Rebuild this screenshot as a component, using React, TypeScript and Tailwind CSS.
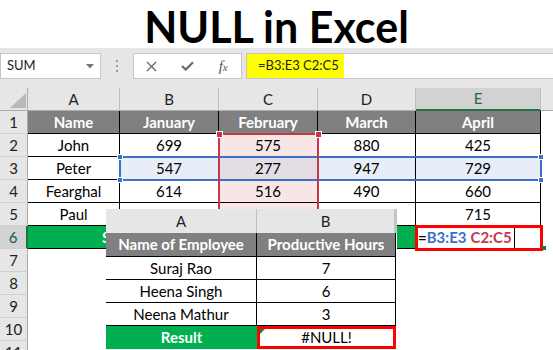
const colWidths = [92, 99, 99, 98, 125];
const colLetters = ["A", "B", "C", "D", "E"];

const tableRows = [
  ["John", "699", "575", "880", "425"],
  ["Peter", "547", "277", "947", "729"],
  ["Fearghal", "614", "516", "490", "660"],
  ["Paul", "", "", "", "715"],
];

const employees = [
  ["Suraj Rao", "7"],
  ["Heena Singh", "6"],
  ["Neena Mathur", "3"],
];

// background of a data cell, from the two selections (B3:E3 blue, C2:C5 red)
function cellBg(row: number, col: number) {
  if (row === 1 && col === 2) return "bg-[#e5dde5]";
  if (col === 2) return "bg-[#f8e6e7]";
  if (row === 1 && col >= 1) return "bg-[#e8eef8]";
  return "bg-white";
}

function RowHeader({ n, active }: { n: number; active?: boolean }) {
  return (
    <div
      className={`w-[28px] h-[23px] shrink-0 flex items-center justify-center text-[15px] border-b border-[#d0d0d0] ${
        active
          ? "bg-[#d2d2d2] text-[#1e5c3a] border-r-2 border-r-[#217346]"
          : "bg-[#e6e6e6] text-[#222] border-r border-r-[#ababab]"
      }`}
    >
      {n}
    </div>
  );
}

function FormulaBar() {
  return (
    <div className="h-[40px] bg-[#e6e6e6] flex items-start pt-[5px]">
      <div className="w-[101px] h-[26px] bg-white border border-[#c6c6c6] flex items-center justify-between pl-[6px] pr-[6px] text-[13px] text-[#222]">
        <span>SUM</span>
        <svg width="8" height="5" viewBox="0 0 8 5">
          <polygon points="0,0 8,0 4,4.5" fill="#777" />
        </svg>
      </div>
      <div className="w-[32px] h-[26px] flex flex-col items-center justify-center gap-[3px]">
        <span className="w-[2px] h-[2px] bg-[#9a9a9a]" />
        <span className="w-[2px] h-[2px] bg-[#9a9a9a]" />
        <span className="w-[2px] h-[2px] bg-[#9a9a9a]" />
      </div>
      <div className="w-[109px] h-[26px] bg-white border border-[#c6c6c6] flex items-center">
        <div className="w-[36px] flex justify-center">
          <svg width="11" height="11" viewBox="0 0 11 11">
            <path d="M1 1 L10 10 M10 1 L1 10" stroke="#6b6b6b" strokeWidth="1.4" />
          </svg>
        </div>
        <div className="w-[36px] flex justify-center">
          <svg width="13" height="10" viewBox="0 0 13 10">
            <path d="M1 5 L4.8 8.6 L12 1.2" stroke="#6b6b6b" strokeWidth="2.2" fill="none" />
          </svg>
        </div>
        <div className="w-[36px] flex justify-center">
          <span className="font-['Liberation_Serif',serif] italic text-[15px] text-[#555] leading-none">
            f<span className="text-[11px]">x</span>
          </span>
        </div>
      </div>
      <div className="ml-[4px] flex-1 h-[26px] bg-white border border-[#c6c6c6] border-r-0">
        <div className="w-[97px] h-full bg-[#ffff00] flex items-center pl-[11px] text-[13px] text-[#222]">
          =B3:E3 C2:C5
        </div>
      </div>
    </div>
  );
}

function Sheet() {
  return (
    <div className="flex flex-col">
      {/* column headers */}
      <div className="flex h-[23px]">
        <div className="w-[28px] shrink-0 bg-[#e6e6e6] border-r border-b border-[#ababab] relative">
          <svg className="absolute left-0 top-0" width="28" height="23" viewBox="0 0 28 23">
            <polygon points="10,20 26,20 26,5" fill="#b8b8b8" />
          </svg>
        </div>
        {colLetters.map((l, i) => (
          <div
            key={l}
            style={{ width: colWidths[i] }}
            className={`shrink-0 flex items-center justify-center text-[15px] border-r border-[#bfbfbf] ${
              l === "E"
                ? "bg-[#d2d2d2] text-[#1e6b40] border-b-2 border-b-[#217346]"
                : "bg-[#e6e6e6] text-[#222] border-b border-b-[#ababab]"
            }`}
          >
            {l}
          </div>
        ))}
        <div className="flex-1 bg-[#e6e6e6] border-b border-[#ababab]" />
      </div>

      {/* row 1: table header */}
      <div className="flex h-[23px]">
        <RowHeader n={1} />
        {["Name", "January", "February", "March", "April"].map((h, i) => (
          <div
            key={h}
            style={{ width: colWidths[i] }}
            className="shrink-0 flex items-center justify-center bg-[#808080] text-white font-bold text-[15px] border-r border-b border-black"
          >
            {h}
          </div>
        ))}
        <div className="flex-1" />
      </div>

      {/* rows 2-5 */}
      {tableRows.map((r, ri) => (
        <div key={ri} className="flex h-[23px]">
          <RowHeader n={ri + 2} />
          {r.map((v, ci) => (
            <div
              key={ci}
              style={{ width: colWidths[ci] }}
              className={`shrink-0 flex items-center justify-center text-[15px] border-r border-b border-black ${cellBg(ri, ci)}`}
            >
              {v}
            </div>
          ))}
          <div className="flex-1" />
        </div>
      ))}

      {/* row 6 */}
      <div className="flex h-[23px]">
        <RowHeader n={6} active />
        <div className="w-[388px] shrink-0 flex items-center pl-[74px] bg-[#00b050] text-white font-bold text-[15px] border-b border-black">
          Sum
        </div>
        <div className="w-[125px] shrink-0 flex items-center pl-[2px] font-bold text-[15px]">
          <span className="text-black">=</span>
          <span className="text-[#3c6fc6]">B3:E3</span>
          <span className="text-[#c8364a] ml-[4px]">C2:C5</span>
          <span className="ml-[2px] w-px h-[20px] bg-black" />
        </div>
        <div className="flex-1" />
      </div>

      {[7, 8, 9, 10, 11].map((n) => (
        <div key={n} className="flex h-[23px]">
          <RowHeader n={n} />
          <div className="flex-1" />
        </div>
      ))}
    </div>
  );
}

function PastedTable() {
  return (
    <div className="absolute left-[106px] top-[209px] w-[291px] bg-white text-[15px]">
      <div className="flex h-[24px]">
        <div className="w-[151px] flex items-center justify-center bg-[#e6e6e6] text-[#222] border-r border-[#bfbfbf]">
          A
        </div>
        <div className="w-[137px] flex items-center justify-center bg-[#e6e6e6] text-[#222]">B</div>
        <div className="w-[3px] bg-[#c4c4c4]" />
      </div>
      <div className="flex h-[24px] w-[290px] bg-[#808080] text-white font-bold">
        <div className="w-[151px] flex items-center justify-center border-r border-b border-black">
          Name of Employee
        </div>
        <div className="w-[139px] flex items-center justify-center border-r border-b border-black whitespace-nowrap">
          Productive Hours
        </div>
      </div>
      {employees.map(([name, hours]) => (
        <div key={name} className="flex h-[23px] w-[290px]">
          <div className="w-[151px] flex items-center justify-center border-r border-b border-black">{name}</div>
          <div className="w-[139px] flex items-center justify-center border-r border-b border-black">{hours}</div>
        </div>
      ))}
      <div className="flex h-[23px] w-[290px]">
        <div className="w-[151px] flex items-center justify-center bg-[#00b050] text-white font-bold">Result</div>
        <div className="relative w-[139px] flex items-center justify-center border-[3px] border-[#ff0000]">
          <svg className="absolute left-0 top-0" width="5" height="5" viewBox="0 0 5 5">
            <polygon points="0,0 5,0 0,5" fill="#1e7a3c" />
          </svg>
          #NULL!
        </div>
      </div>
    </div>
  );
}

export default function App() {
  return (
    <div className="relative w-[553px] h-[350px] overflow-hidden bg-white text-black font-[Lato,sans-serif]">
      <h1 className="h-[48px] pt-[3px] text-center text-[43px] font-bold leading-[48px]">NULL in Excel</h1>
      <FormulaBar />
      <Sheet />

      {/* B3:E3 range outline */}
      <div className="absolute left-[119px] top-[156px] w-[423px] h-[25px] border-2 border-[#3c6fc6]" />
      <div className="absolute left-[117px] top-[154px] w-[6px] h-[6px] bg-[#3c6fc6] border border-white" />
      <div className="absolute left-[117px] top-[177px] w-[6px] h-[6px] bg-[#3c6fc6] border border-white" />
      <div className="absolute left-[538px] top-[154px] w-[6px] h-[6px] bg-[#3c6fc6] border border-white" />
      <div className="absolute left-[538px] top-[177px] w-[6px] h-[6px] bg-[#3c6fc6] border border-white" />

      {/* C2:C5 range outline */}
      <div className="absolute left-[218px] top-[133px] w-[101px] h-[100px] border-2 border-b-0 border-[#c8364a]" />
      <div className="absolute left-[216px] top-[131px] w-[7px] h-[7px] bg-[#c8364a] border border-white" />
      <div className="absolute left-[315px] top-[131px] w-[7px] h-[7px] bg-[#c8364a] border border-white" />

      {/* active cell E6 */}
      <div className="absolute left-[415px] top-[225px] w-[128px] h-[26px] border-[3px] border-[#ff0000]" />
      <div className="absolute left-[542px] top-[246px] w-[4px] h-[4px] bg-[#217346]" />

      <PastedTable />
    </div>
  );
}
